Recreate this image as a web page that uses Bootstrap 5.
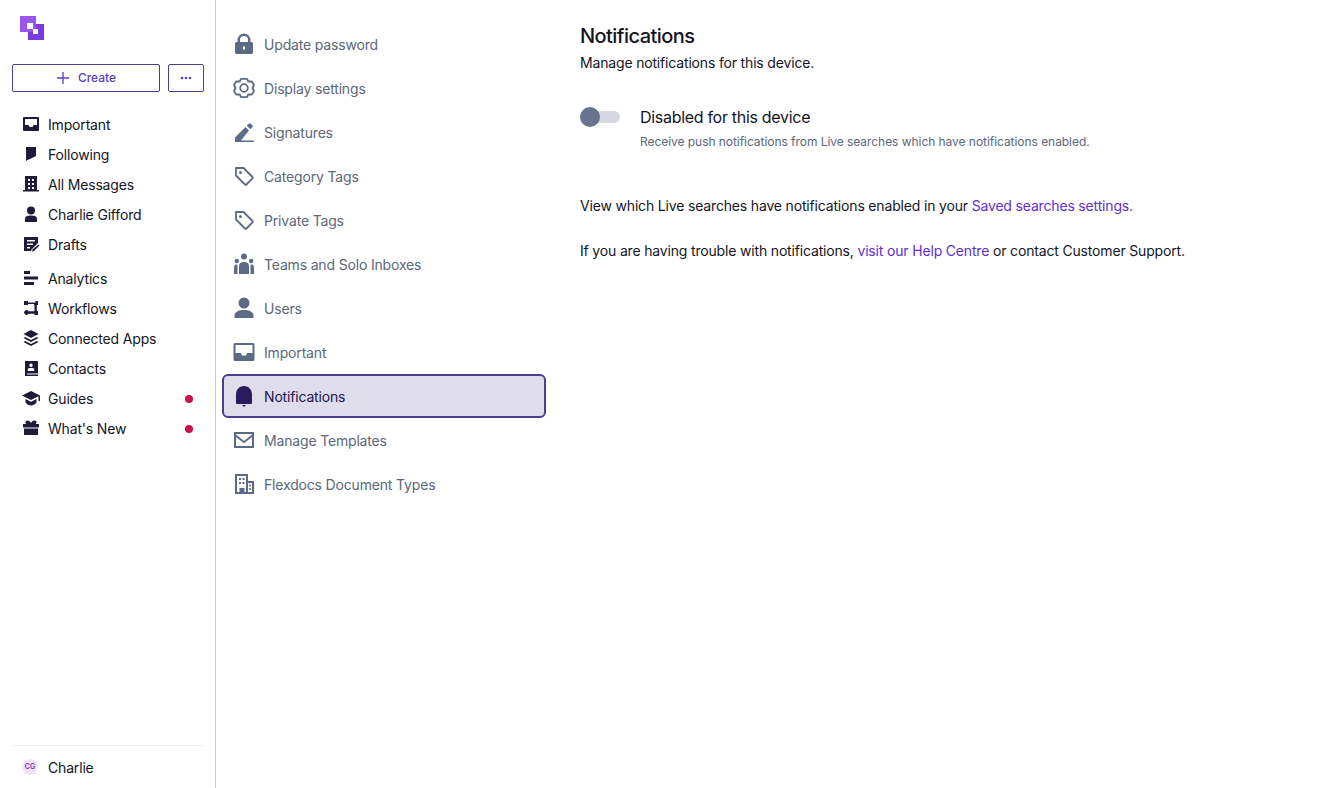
<!DOCTYPE html>
<html lang="en">
<head>
    <meta charset="UTF-8">
    <title>Notifications</title>
    <link href="https://cdn.jsdelivr.net/npm/bootstrap@5.3.0/dist/css/bootstrap.min.css" rel="stylesheet">
    <style>
        html, body { height: 100%; }
        body { font-family: Inter, "Liberation Sans", sans-serif; font-size: 14px; letter-spacing: -0.17px; color: #14141f; background: #fff; overflow: hidden; }
        a { color: #5f2fd0; text-decoration: none; }

        .app { height: 788px; }
        .side { width: 216px; border-right: 1px solid #c9c9cc; padding: 16px 11px 0 12px; }
        .logo { margin: 0 0 24px 8px; height: 24px; }
        .btn-create { height: 28px; border: 1px solid #4f3d96; border-radius: 2px; color: #5a3fc0; font-size: 12px; font-weight: 500; background: #fff; padding: 0; }
        .btn-create.main { width: 148px; }
        .btn-create.more { width: 36px; }
        .side-nav { margin-top: 17px; }
        .side-nav a { height: 30px; padding-left: 10px; color: #14141f; }
        .side-nav svg { width: 18px; height: 18px; margin-right: 8px; fill: #1c1b3a; flex: none; }
        .side-nav .gap { margin-top: 4px; }
        .dot { width: 8px; height: 8px; border-radius: 50%; background: #c8104f; margin-right: 11px; margin-top: 1px; }
        .side-foot { border-top: 1px solid #f0f0f2; margin: 0 -1px 0 -2px; height: 43px; padding-left: 12px; }
        .avatar { width: 16px; height: 16px; border-radius: 50%; background: #f3e3f8; color: #7a3aa8; font-size: 7px; font-weight: 600; letter-spacing: 0; margin-right: 10px; }

        .settings { width: 330px; padding: 22px 0 0 6px; }
        .settings a { height: 44px; width: 324px; padding-left: 11px; color: #5c6779; border: 2px solid transparent; border-radius: 6px; }
        .settings svg { width: 22px; height: 22px; margin-right: 9px; fill: #5c6b85; flex: none; margin-left: -2px; }
        .settings svg .line { fill: none; stroke: #5c6b85; stroke-width: 1.8; stroke-linejoin: round; }
        .settings a.active { background: #dfdcec; border-color: #4f3d96; color: #23174f; }
        .settings a.active svg { fill: #2a1a5e; }

        .content { padding: 23px 0 0 34px; }
        .content h1 { font-size: 20px; font-weight: 500; line-height: 26px; letter-spacing: -0.55px; margin: 0; color: #14141f; }
        .lead-line { line-height: 20px; margin: 4px 0 0; color: #14141f; }
        .toggle-row { margin-top: 32px; height: 44px; }
        .track { width: 40px; height: 12px; border-radius: 6px; background: #d6d9e0; margin-top: 6px; }
        .knob { width: 20px; height: 20px; border-radius: 50%; background: #66748f; top: -4px; left: 0; }
        .toggle-title { font-size: 16px; line-height: 24px; letter-spacing: -0.3px; margin-left: 20px; }
        .toggle-desc { font-size: 12px; line-height: 18px; letter-spacing: -0.05px; color: #5c6779; margin-left: 20px; margin-top: 4px; }
        .note { line-height: 20px; margin: 0 0 25px; }
        .notes { margin-top: 47px; }
    </style>
</head>
<body>
<div class="app d-flex">

    <!-- Main sidebar -->
    <div class="side d-flex flex-column flex-shrink-0">
        <div class="logo">
            <svg width="24" height="24" viewBox="0 0 24 24">
                <path fill="#9a55ee" d="M0 0h16v16H0z"/>
                <path fill="#7c3bdf" d="M8 16h8V8h8v16H8z"/>
                <path fill="#fff" d="M7 7h6v6H7zM13 13h5v5h-5z"/>
            </svg>
        </div>
        <div class="d-flex gap-2">
            <button class="btn-create main d-flex align-items-center justify-content-center">
                <svg width="14" height="14" viewBox="0 0 14 14" class="me-1"><path d="M7 1v12M1 7h12" stroke="#5a3fc0" stroke-width="1.3"/></svg>
                <span class="ms-1">Create</span>
            </button>
            <button class="btn-create more d-flex align-items-center justify-content-center">
                <svg width="12" height="4" viewBox="0 0 12 4"><g fill="#5a3fc0"><circle cx="2" cy="2" r="1.3"/><circle cx="6" cy="2" r="1.3"/><circle cx="10" cy="2" r="1.3"/></g></svg>
            </button>
        </div>

        <nav class="side-nav d-flex flex-column">
            <a href="#" class="d-flex align-items-center"><svg viewBox="0 0 18 18"><path fill-rule="evenodd" d="M2 2h14a1 1 0 0 1 1 1v12a1 1 0 0 1-1 1H2a1 1 0 0 1-1-1V3a1 1 0 0 1 1-1zm1 2v6h3.500l1 2h3l1-2H15V4z"/></svg>Important</a>
            <a href="#" class="d-flex align-items-center"><svg viewBox="0 0 18 18"><path d="M4 2h10v9l-6 3-2 .7-2 1.300z"/></svg>Following</a>
            <a href="#" class="d-flex align-items-center"><svg viewBox="0 0 18 18"><path fill-rule="evenodd" d="M3 1h12v14h2v1.500H1V15h2zm3 3v2h2V4zm4 0v2h2V4zM6 8v2h2V8zm4 0v2h2V8zm-4 4v2h2v-2zm4 0v2h2v-2z"/></svg>All Messages</a>
            <a href="#" class="d-flex align-items-center"><svg viewBox="0 0 18 18"><circle cx="9" cy="5.500" r="4"/><path d="M3 17v-3.500C3 11.500 5 10.500 9 10.500s6 1 6 3V17z"/></svg>Charlie Gifford</a>
            <a href="#" class="d-flex align-items-center"><svg viewBox="0 0 18 18"><path fill-rule="evenodd" d="M2 2h14v6l-6.500 6.500L9 16h7v0H2zm3 3v1.500h8V5zm0 3.500V10h6V8.500zM5 12v1.500h3V12z"/><path d="M16.500 9.500l1 1L12 16l-2 .5.500-2z"/></svg>Drafts</a>
            <a href="#" class="d-flex align-items-center gap"><svg viewBox="0 0 18 18"><path d="M2 2h6v3H2zM2 7.500h14v3H2zM2 13h10v3H2z"/></svg>Analytics</a>
            <a href="#" class="d-flex align-items-center"><svg viewBox="0 0 18 18"><path d="M2 2h4v1.500h7.500V2H16v4h-1.200v6H16v4h-3.500v-1.300H6.500a2.300 2.300 0 1 1 0-2.400h6V6h-.5V5H6v1H2z"/></svg>Workflows</a>
            <a href="#" class="d-flex align-items-center"><svg viewBox="0 0 18 18"><path d="M9 1l7.500 4L9 9 1.500 5zM3.200 8L9 11l5.800-3 1.700 1L9 13 1.500 9zM3.200 12L9 15l5.800-3 1.700 1L9 17l-7.500-4z"/></svg>Connected Apps</a>
            <a href="#" class="d-flex align-items-center"><svg viewBox="0 0 18 18"><path fill-rule="evenodd" d="M3 2h13v12.500H5v1h11V17H3zm6 2.500a1.700 1.700 0 1 0 0 3.400 1.700 1.700 0 0 0 0-3.400zM5.800 12h6.400v-1.800C12.200 9.300 11 9 9 9s-3.200.3-3.200 1.200z"/></svg>Contacts</a>
            <a href="#" class="d-flex align-items-center"><svg viewBox="0 0 18 18"><path d="M9 2L0 6.500 9 11l7.500-3.800V12H18V6.500zM3.500 10v3.500C5 15.500 7 16.500 9 16.500s4-1 5.500-3V10L9 12.800z"/></svg>Guides<span class="dot ms-auto"></span></a>
            <a href="#" class="d-flex align-items-center"><svg viewBox="0 0 18 18"><path d="M5.500 1.500C7 1.500 8.300 2.500 9 4c.7-1.500 2-2.500 3.500-2.500 2.500 0 2.500 3 1 3.500H17v3.500H1V5h3.500C3 4.500 3 1.500 5.500 1.500zM2 9.500h14V16H2z"/></svg>What's New<span class="dot ms-auto"></span></a>
        </nav>

        <div class="side-foot mt-auto d-flex align-items-center">
            <span class="avatar d-flex align-items-center justify-content-center">CG</span>Charlie
        </div>
    </div>

    <!-- Settings menu -->
    <nav class="settings d-flex flex-column flex-shrink-0">
        <a href="#" class="d-flex align-items-center flex-shrink-0"><svg viewBox="0 0 22 22"><path d="M4.500 9V7a6.500 6.500 0 0 1 13 0v2h1A1.500 1.500 0 0 1 20 10.500v9a1.500 1.500 0 0 1-1.500 1.500h-15A1.500 1.500 0 0 1 2 19.500v-9A1.500 1.500 0 0 1 3.500 9zm2.500 0h8V7a4 4 0 0 0-8 0z M10 13.500v3h2v-3z" fill-rule="evenodd"/></svg>Update password</a>
        <a href="#" class="d-flex align-items-center flex-shrink-0"><svg viewBox="0 0 22 22"><path class="line" d="M8 1.800h6l1.300 2.700 3.300-.2 2.400 3.700-1.500 3 1.500 3-2.400 3.700-3.300-.2-1.300 2.700H8l-1.300-2.700-3.300.2L1 14l1.500-3L1 8l2.400-3.700 3.300.2z"/><circle class="line" cx="11" cy="11" r="3.800"/></svg>Display settings</a>
        <a href="#" class="d-flex align-items-center flex-shrink-0"><svg viewBox="0 0 22 22"><path d="M2 19.500v-3L12.500 6l3.500 3.500L8 19.500zM13.800 4.700L16 2.500a1 1 0 0 1 1.400 0l2.100 2.100a1 1 0 0 1 0 1.400l-2.200 2.200zM8 19.500h13V21H2v-1.500z"/></svg>Signatures</a>
        <a href="#" class="d-flex align-items-center flex-shrink-0"><svg viewBox="0 0 22 22"><path class="line" d="M3 3h7.500l9 9a1 1 0 0 1 0 1.400l-6.100 6.100a1 1 0 0 1-1.400 0l-9-9z"/><circle cx="7.500" cy="7.500" r="1.500"/></svg>Category Tags</a>
        <a href="#" class="d-flex align-items-center flex-shrink-0"><svg viewBox="0 0 22 22"><path class="line" d="M3 3h7.500l9 9a1 1 0 0 1 0 1.400l-6.100 6.100a1 1 0 0 1-1.400 0l-9-9z"/><circle cx="7.500" cy="7.500" r="1.500"/></svg>Private Tags</a>
        <a href="#" class="d-flex align-items-center flex-shrink-0"><svg viewBox="0 0 22 22"><circle cx="11" cy="3.500" r="3"/><circle cx="3.800" cy="8" r="2.200"/><circle cx="18.200" cy="8" r="2.200"/><path d="M6 21v-8c0-2.500 2-4 5-4s5 1.500 5 4v8zM1 21v-6c0-2 .8-3.500 2.500-3.500.5 0 .8.100 1 .3V21zM21 21v-6c0-2-.8-3.500-2.500-3.500-.5 0-.8.100-1 .3V21z"/></svg>Teams and Solo Inboxes</a>
        <a href="#" class="d-flex align-items-center flex-shrink-0"><svg viewBox="0 0 22 22"><circle cx="11" cy="6" r="5.500"/><path d="M1.500 21v-2.500c0-3.500 4-5.500 9.500-5.500s9.500 2 9.500 5.500V21z"/></svg>Users</a>
        <a href="#" class="d-flex align-items-center flex-shrink-0"><svg viewBox="0 0 22 22"><path fill-rule="evenodd" d="M2 2h18a1.500 1.500 0 0 1 1.500 1.500v15A1.500 1.500 0 0 1 20 20H2a1.500 1.500 0 0 1-1.500-1.500v-15A1.500 1.500 0 0 1 2 2zm.5 2v8H8l1 2.500h4l1-2.500h5.500V4z"/></svg>Important</a>
        <a href="#" class="d-flex align-items-center flex-shrink-0 active"><svg viewBox="0 0 22 22"><path d="M3 9.500C3 4.500 6.500 1 11 1s8 3.500 8 8.500V18a1 1 0 0 1-1 1H4a1 1 0 0 1-1-1zM9 20h4l-2 2z"/></svg>Notifications</a>
        <a href="#" class="d-flex align-items-center flex-shrink-0"><svg viewBox="0 0 22 22"><path fill-rule="evenodd" d="M1 3h20v16H1zm2 2v.6l8 6.400 8-6.400V5zm0 3v9h16V8l-8 6.300z"/></svg>Manage Templates</a>
        <a href="#" class="d-flex align-items-center flex-shrink-0"><svg viewBox="0 0 22 22"><path fill-rule="evenodd" d="M2 1h13v7h6v13H2zm2 2v16h2.500v-4h5v4H13V3zM6 5h2v2H6zm3.500 0h2v2h-2zM6 9h2v2H6zm3.500 0h2v2h-2zM15 10v9h4v-9zm1.200 1.500h1.600v2h-1.600zm0 3.500h1.600v2h-1.600z"/></svg>Flexdocs Document Types</a>
    </nav>

    <!-- Content -->
    <main class="content flex-grow-1">
        <h1>Notifications</h1>
        <p class="lead-line">Manage notifications for this device.</p>

        <div class="toggle-row d-flex">
            <div>
                <div class="track position-relative"><div class="knob position-absolute"></div></div>
            </div>
            <div>
                <div class="toggle-title">Disabled for this device</div>
                <div class="toggle-desc">Receive push notifications from Live searches which have notifications enabled.</div>
            </div>
        </div>

        <div class="notes">
            <p class="note">View which Live searches have notifications enabled in your <a href="#">Saved searches settings.</a></p>
            <p class="note">If you are having trouble with notifications, <a href="#">visit our Help Centre</a> or contact Customer Support.</p>
        </div>
    </main>
</div>
<script src="https://cdn.jsdelivr.net/npm/bootstrap@5.3.0/dist/js/bootstrap.bundle.min.js"></script>
</body>
</html>
